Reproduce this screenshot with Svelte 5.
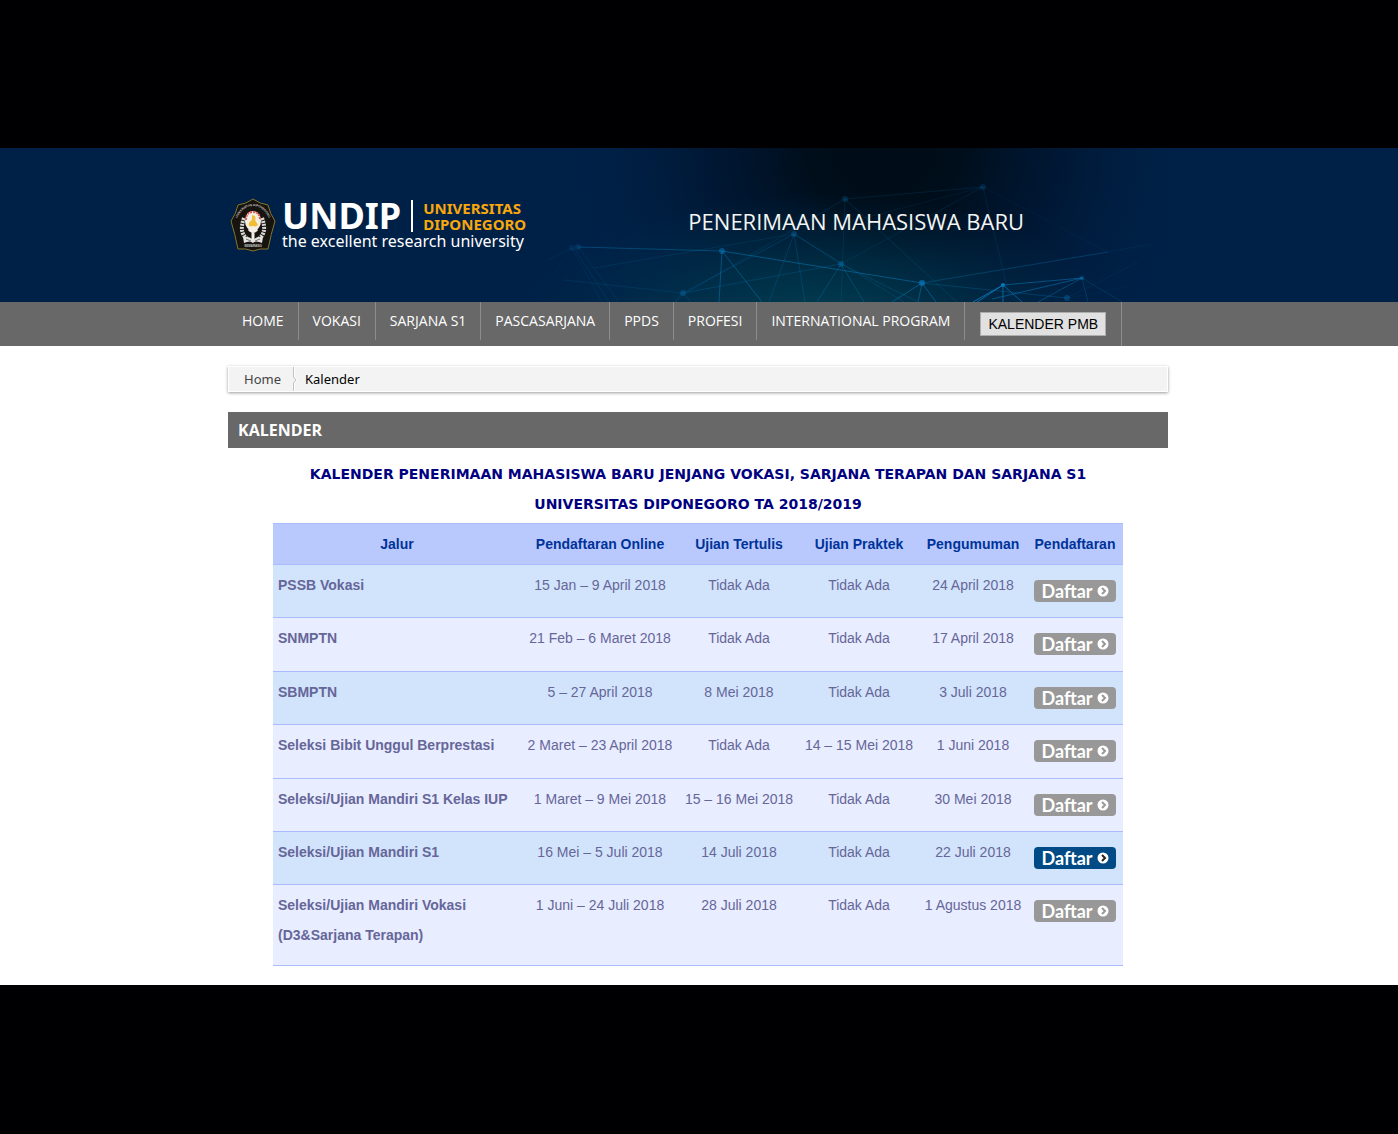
<script>
	const menu = ['HOME', 'VOKASI', 'SARJANA S1', 'PASCASARJANA', 'PPDS', 'PROFESI', 'INTERNATIONAL PROGRAM'];

	const columns = [
		{ label: 'Jalur', name: 'jalur' },
		{ label: 'Pendaftaran Online', name: 'online' },
		{ label: 'Ujian Tertulis', name: 'ujian' },
		{ label: 'Ujian Praktek', name: 'ujian' },
		{ label: 'Pengumuman', name: 'hasil' },
		{ label: 'Pendaftaran', name: 'daftar' }
	];

	const rows = [
		{ jalur: 'PSSB Vokasi', dates: ['15 Jan – 9 April 2018', 'Tidak Ada', 'Tidak Ada', '24 April 2018'], dark: true },
		{ jalur: 'SNMPTN', dates: ['21 Feb – 6 Maret 2018', 'Tidak Ada', 'Tidak Ada', '17 April 2018'] },
		{ jalur: 'SBMPTN', dates: ['5 – 27 April 2018', '8 Mei 2018', 'Tidak Ada', '3 Juli 2018'], dark: true },
		{ jalur: 'Seleksi Bibit Unggul Berprestasi', dates: ['2 Maret – 23 April 2018', 'Tidak Ada', '14 – 15 Mei 2018', '1 Juni 2018'] },
		{ jalur: 'Seleksi/Ujian Mandiri S1 Kelas IUP', dates: ['1 Maret – 9 Mei 2018', '15 – 16 Mei 2018', 'Tidak Ada', '30 Mei 2018'] },
		{ jalur: 'Seleksi/Ujian Mandiri S1', dates: ['16 Mei – 5 Juli 2018', '14 Juli 2018', 'Tidak Ada', '22 Juli 2018'], dark: true, open: true },
		{ jalur: 'Seleksi/Ujian Mandiri Vokasi', extra: '(D3&Sarjana Terapan)', dates: ['1 Juni – 24 Juli 2018', '28 Juli 2018', 'Tidak Ada', '1 Agustus 2018'] }
	];

	// [x1, y1, x2, y2, opacity]
	const lines = [
		[350, 99, 494, 103, 0.5], [344, 100, 374, 154, 0.15], [346, 100, 381, 154, 0.2], [350, 99, 391, 154, 0.2],
		[344, 100, 320, 112, 0.12], [344, 100, 324, 128, 0.08], [366, 120, 566, 86, 0.2], [336, 132, 455, 145, 0.2],
		[494, 103, 491, 154, 0.6], [494, 103, 534, 154, 0.6], [494, 103, 694, 135, 0.65], [455, 145, 566, 86, 0.3],
		[458, 145, 617, 51, 0.2], [455, 145, 613, 116, 0.3], [455, 145, 447, 154, 0.3], [455, 145, 463, 154, 0.3],
		[566, 86, 541, 154, 0.3], [566, 86, 577, 154, 0.3], [566, 86, 613, 116, 0.3], [566, 86, 676, 154, 0.25],
		[617, 51, 613, 154, 0.2], [617, 51, 755, 39, 0.18], [617, 51, 729, 154, 0.25], [613, 116, 589, 154, 0.4],
		[613, 116, 636, 154, 0.4], [613, 116, 690, 154, 0.3], [613, 116, 755, 39, 0.18], [617, 75, 755, 39, 0.12],
		[755, 39, 781, 147, 0.18], [755, 39, 880, 104, 0.1], [694, 135, 664, 154, 0.65], [694, 135, 690, 154, 0.65],
		[694, 135, 708, 154, 0.65], [694, 135, 880, 104, 0.4], [880, 104, 924, 96, 0.12], [694, 135, 839, 150, 0.35],
		[775, 137, 745, 154, 1], [775, 137, 749, 154, 1], [775, 137, 775, 154, 0.9], [775, 137, 794, 154, 0.8],
		[775, 137, 854, 130, 0.65], [854, 130, 764, 151, 0.65], [854, 130, 810, 154, 0.5], [854, 130, 860, 154, 0.35],
		[854, 130, 894, 154, 0.25], [839, 150, 910, 114, 0.12], [839, 150, 900, 139, 0.08]
	];

	// [x, y, radius, opacity]
	const nodes = [
		[344, 100, 3, 0.15], [350, 99, 3, 0.2], [494, 103, 3, 0.5], [455, 145, 3, 0.35], [566, 86, 3, 0.35], [617, 51, 3, 0.25],
		[613, 116, 3, 0.4], [755, 39, 3, 0.2], [694, 135, 3, 0.7], [775, 137, 2, 1], [854, 130, 2, 0.5], [839, 150, 3, 0.35]
	];
</script>

<div class="site">
	<header>
		<div class="inner banner">
			<svg class="art" viewBox="0 0 940 154" preserveAspectRatio="xMidYMid slice" aria-hidden="true">
				<defs>
					<radialGradient id="shade" gradientUnits="userSpaceOnUse" cx="0" cy="0" r="1" gradientTransform="translate(655 0) scale(310 280)">
						<stop offset="0" stop-color="#000c16" />
						<stop offset="0.25" stop-color="#000d19" stop-opacity="0.95" />
						<stop offset="0.6" stop-color="#001229" stop-opacity="0.55" />
						<stop offset="1" stop-color="#001d40" stop-opacity="0" />
					</radialGradient>
					<radialGradient id="glow" gradientUnits="userSpaceOnUse" cx="0" cy="0" r="1" gradientTransform="translate(590 175) scale(300 130)">
						<stop offset="0" stop-color="#004052" />
						<stop offset="0.5" stop-color="#00374e" stop-opacity="0.6" />
						<stop offset="1" stop-color="#002c4c" stop-opacity="0" />
					</radialGradient>
				</defs>
				<rect x="315" width="625" height="154" fill="url(#shade)" />
				<rect x="290" width="650" height="154" fill="url(#glow)" />
				{#each lines as [x1, y1, x2, y2, opacity]}
					<line {x1} {y1} {x2} {y2} stroke="#087dbb" stroke-opacity={opacity * 0.8} />
				{/each}
				{#each nodes as [cx, cy, r, opacity]}
					<circle {cx} {cy} {r} fill="#0876b8" fill-opacity={opacity} />
				{/each}
			</svg>
			<div class="front">
				<a class="logo" href="#home">
					<svg class="emblem" viewBox="0 0 46 54" aria-hidden="true">
						<path d="M23 1 Q30 6 38 7 Q40 16 45 23 Q41 36 38 51 Q30 50 23 53 Q16 50 8 51 Q5 36 1 23 Q6 16 8 7 Q16 6 23 1 Z" fill="#17130f" stroke="#86762a" />
						<path id="arc" d="M6 28 A17 20 0 1 1 40 28" fill="none" />
						<text class="ring"><textPath href="#arc" startOffset="50%" text-anchor="middle">UNIVERSITAS DIPONEGORO</textPath></text>
						<path d="M14 20 Q8 36 19 42 M32 20 Q38 36 27 42" fill="none" stroke="#d9d9d7" stroke-width="4" stroke-dasharray="2 1" />
						<ellipse cx="23" cy="23" rx="8" ry="10" fill="#f3efe6" />
						<path d="M16 22 Q16 14 23 14 Q30 14 30 22" fill="none" stroke="#dc5a50" stroke-width="2" stroke-dasharray="2 1" />
						<path d="M22 17 Q27 18 25 22 L28 27 Q24 30 19 28 Q18 24 22 22 Z" fill="#f0bd33" />
						<path d="M23 28 V42 M19 31 Q23 36 27 31" fill="none" stroke="#f3efe6" stroke-width="3" />
						<path d="M13 39 Q19 38 23 42 Q27 38 33 39 L32 45 Q26 42 23 45 Q20 42 14 45 Z" fill="#e3e3e0" />
						<path d="M16 41 L21 43 M30 41 L25 43" stroke="#777" />
						<text class="ring" x="23" y="49" text-anchor="middle">SEMARANG</text>
					</svg>
					<span class="brand">
						<span class="brand-top">
							<span class="undip">UNDIP</span>
							<span class="univ">
								<span>UNIVERSITAS</span>
								<span>DIPONEGORO</span>
							</span>
						</span>
						<span class="tagline">the excellent research university</span>
					</span>
				</a>
				<p class="slogan">PENERIMAAN MAHASISWA BARU</p>
			</div>
		</div>
	</header>

	<nav>
		<ul class="inner">
			{#each menu as item}
				<li><a href="#menu">{item}</a></li>
			{/each}
			<li class="last"><button type="button">KALENDER PMB</button></li>
		</ul>
	</nav>

	<main>
		<div class="inner">
			<div class="breadcrumb">
				<a href="#home">Home</a>
				<svg viewBox="0 0 6 24" aria-hidden="true">
					<path d="M2.500 0 V10 L5 13 L2.500 16 V24" fill="none" stroke="#fff" />
					<path d="M1.500 0 V10 L4 13 L1.500 16 V24" fill="none" stroke="#c2c2c2" />
				</svg>
				<span>Kalender</span>
			</div>

			<h1>KALENDER</h1>

			<h2>
				KALENDER PENERIMAAN MAHASISWA BARU JENJANG VOKASI, SARJANA TERAPAN DAN SARJANA S1<br />
				UNIVERSITAS DIPONEGORO TA 2018/2019
			</h2>

			<table>
				<thead>
					<tr>
						{#each columns as column}
							<th class={column.name} scope="col">{column.label}</th>
						{/each}
					</tr>
				</thead>
				<tbody>
					{#each rows as row}
						<tr class:dark={row.dark}>
							<th scope="row">{row.jalur}{#if row.extra}<br />{row.extra}{/if}</th>
							{#each row.dates as date}
								<td>{date}</td>
							{/each}
							<td class="action">
								<a class="register" class:open={row.open} href="#daftar">
									Daftar
									<svg viewBox="0 0 12 12" aria-hidden="true">
										<circle cx="6" cy="6" r="5.500" fill="#fff" />
										<path class="chevron" d="M5 3 L8 6 L5 9" fill="none" stroke-width="2" />
									</svg>
								</a>
							</td>
						</tr>
					{/each}
				</tbody>
			</table>
		</div>
	</main>
</div>

<style>
	:global(body) {
		background: #000002;
	}
	.site {
		padding: 148px 0;
		font-family: "Open Sans", sans-serif;
	}
	header, nav, main {
		padding-right: 2px;
	}
	.inner {
		max-width: 940px;
		margin: 0 auto;
	}
	a {
		color: inherit;
		text-decoration: none;
	}

	/* banner */
	header {
		background: #002147;
	}
	.banner {
		display: grid;
	}
	.art, .front {
		grid-area: 1 / 1;
	}
	.art {
		display: block;
		width: 100%;
		height: 154px;
	}
	.front {
		display: flex;
		align-items: center;
		justify-content: space-between;
		padding: 0 144px 0 2px;
	}
	.logo {
		display: flex;
		align-items: center;
		gap: 6px;
		color: #fff;
		font-family: "Noto Sans", sans-serif;
	}
	.emblem {
		width: 46px;
		height: 54px;
	}
	.ring {
		fill: #c8c8c8;
		font-family: "Liberation Sans", sans-serif;
		font-size: 3px;
		font-weight: bold;
	}
	.brand, .univ {
		display: flex;
		flex-direction: column;
	}
	.brand {
		padding-bottom: 2px;
	}
	.brand-top {
		display: flex;
		align-items: center;
		gap: 10px;
	}
	.undip {
		font-size: 36px;
		font-weight: bold;
		line-height: 34px;
	}
	.univ {
		padding-left: 10px;
		border-left: 2px solid #fff;
		color: #f9a70b;
		font-size: 15px;
		font-weight: bold;
		line-height: 16px;
	}
	.tagline {
		font-size: 16px;
		line-height: 16px;
	}
	.slogan {
		margin: 0;
		padding-bottom: 8px;
		color: #f4f4f4;
		font-size: 22px;
		line-height: 32px;
	}

	/* menu */
	nav {
		background: #686868;
	}
	nav ul {
		display: flex;
		align-items: flex-start;
		padding: 0;
		list-style: none;
	}
	nav li {
		padding: 0 14px;
		border-right: 1px solid #8c8c8c;
		color: #fff;
		font-size: 14px;
		line-height: 38px;
	}
	nav .last {
		display: flex;
		align-items: center;
		height: 44px;
		padding: 0 15px;
	}
	button {
		height: 24px;
		padding: 0 7px;
		border: 1px solid #adadad;
		background: #e1e1e1;
		color: #000;
		font-family: "Liberation Sans", sans-serif;
		font-size: 14px;
	}

	/* content */
	main {
		padding-top: 20px;
		padding-bottom: 19px;
		background: #fff;
	}
	.breadcrumb {
		display: flex;
		align-items: center;
		height: 24px;
		padding-left: 15px;
		border: 1px solid #fff;
		background: #f3f3f3;
		box-shadow: 0 1px 3px rgba(0, 0, 0, 0.4);
		color: #000;
		font-family: "Noto Sans", sans-serif;
		font-size: 13px;
	}
	.breadcrumb a {
		color: #444;
	}
	.breadcrumb svg {
		width: 6px;
		height: 24px;
		margin: 0 7px 0 11px;
	}
	h1 {
		margin: 20px 0 0;
		padding: 0 10px;
		background: #686868;
		color: #fff;
		font-size: 16px;
		font-weight: bold;
		line-height: 36px;
	}
	h2 {
		margin: 11px 0 4px;
		color: #000080;
		font-family: "DejaVu Sans", sans-serif;
		font-size: 14px;
		font-weight: bold;
		line-height: 30px;
		text-align: center;
	}
	table {
		width: 850px;
		margin: 0 auto;
		border-collapse: collapse;
		table-layout: fixed;
		background: #e8edff;
		color: #666699;
		font-family: "Liberation Sans", sans-serif;
		font-size: 14px;
		line-height: 30px;
	}
	th, td {
		padding: 5px;
		border-top: 1px solid #aabcfe;
		border-bottom: 1px solid #aabcfe;
		text-align: center;
		vertical-align: top;
		white-space: nowrap;
	}
	thead {
		background: #b9c9fe;
		color: #003399;
	}
	.jalur {
		width: 238px;
	}
	.online {
		width: 148px;
	}
	.ujian {
		width: 110px;
	}
	.hasil {
		width: 98px;
	}
	tbody th {
		text-align: left;
	}
	tbody tr {
		height: 53px;
	}
	tbody tr:nth-child(even):not(.dark) {
		height: 54px;
	}
	tbody tr:last-child {
		height: 81px;
	}
	.dark {
		background: #d2e4fc;
	}
	.action {
		padding-top: 15px;
		padding-bottom: 0;
	}
	.register {
		display: flex;
		align-items: center;
		justify-content: center;
		gap: 4px;
		width: 82px;
		height: 22px;
		margin: 0 auto;
		border-radius: 4px;
		background: #989898;
		color: #fff;
		font-family: Lato, sans-serif;
		font-size: 18px;
		font-weight: bold;
		line-height: 20px;
	}
	.register svg {
		width: 12px;
		height: 12px;
	}
	.chevron {
		stroke: #989898;
	}
	.open {
		background: #004b85;
	}
	.open .chevron {
		stroke: #222;
	}
</style>
